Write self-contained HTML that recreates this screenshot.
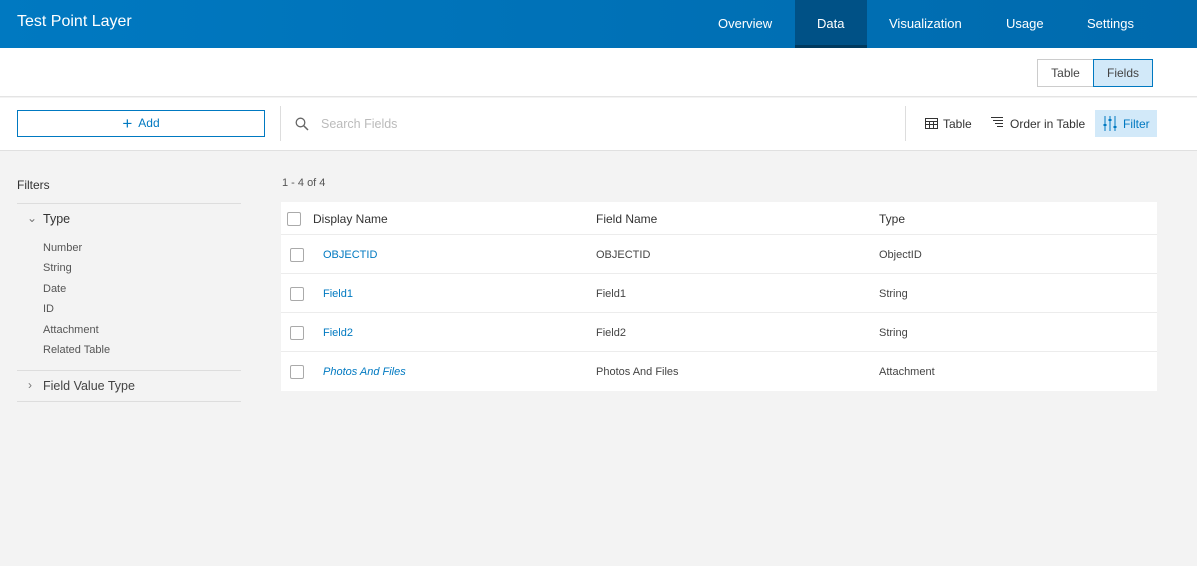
<!DOCTYPE html>
<html><head><style>
*{box-sizing:border-box;margin:0;padding:0}
body{width:1197px;height:566px;background:#f3f3f3;font-family:"Liberation Sans",sans-serif;position:relative;overflow:hidden;color:#323232}
.hdr{position:absolute;left:0;top:0;width:1197px;height:48px;background:linear-gradient(90deg,#0079c1,#006aad)}
.hdr .t{position:absolute;left:17px;top:13px;color:#fff;font-size:16px}
.nav{position:absolute;top:16px;color:#fff;font-size:13px}
.data{position:absolute;left:795px;top:0;width:72px;height:48px;background:#005186;border-bottom:3px solid #003a5f}
.bar1{position:absolute;left:0;top:48px;width:1197px;height:49px;background:#fff;border-bottom:1px solid #e4e4e4}
.seg{position:absolute;top:59px;height:28px;font-size:12px;line-height:26px;text-align:center;border:1px solid #ccc;color:#444}
.bar2{position:absolute;left:0;top:98px;width:1197px;height:53px;background:#fff;border-bottom:1px solid #e0e0e0}
.add{position:absolute;left:17px;top:110px;width:248px;height:27px;border:1px solid #0079c1;color:#0079c1;font-size:12px;text-align:center;line-height:25px}
.vs{position:absolute;top:106px;width:1px;height:35px;background:#ddd}
.tb{position:absolute;top:117px;font-size:12px;color:#323232}
.side{position:absolute;font-size:11px;color:#555}
.hl{position:absolute;left:17px;width:224px;height:1px;background:#ddd}
.tbl{position:absolute;left:281px;top:202px;width:876px;background:#fff}
.row{position:relative;height:39px;border-bottom:1px solid #ececec;font-size:11px;color:#444}
.row span{position:absolute;top:14px}
.cb{position:absolute;left:9px;top:13px;width:14px;height:14px;border:1px solid #aaa;border-radius:2px;background:#fff}
a{color:#0079c1;text-decoration:none}
</style></head><body>
<div class="hdr"><div class="t">Test Point Layer</div>
<div class="data"></div>
<div class="nav" style="left:718px">Overview</div>
<div class="nav" style="left:817px">Data</div>
<div class="nav" style="left:889px">Visualization</div>
<div class="nav" style="left:1006px">Usage</div>
<div class="nav" style="left:1087px">Settings</div>
</div>
<div class="bar1"></div>
<div class="seg" style="left:1037px;width:57px;background:#fff">Table</div>
<div class="seg" style="left:1093px;width:60px;background:#d2e9f9;border-color:#0079c1">Fields</div>
<div class="bar2"></div>
<div class="add"><span style="font-size:17px;vertical-align:-2px">+</span>&nbsp; Add</div>
<div class="vs" style="left:280px"></div>
<svg style="position:absolute;left:295px;top:117px" width="14" height="14" viewBox="0 0 14 14"><circle cx="5.5" cy="5.5" r="4.3" fill="none" stroke="#666" stroke-width="1.3"/><path d="M8.6 8.6L13 13" stroke="#666" stroke-width="1.5"/></svg>
<div class="tb" style="left:321px;color:#bbb;font-size:12.5px">Search Fields</div>
<div class="vs" style="left:905px"></div>
<svg style="position:absolute;left:925px;top:118px" width="13" height="11"><rect x=".5" y=".5" width="12" height="10" fill="none" stroke="#333"/><path d="M0 3.5h13M0 6.5h13M4.5 3v8M8.5 3v8" stroke="#333"/></svg>
<div class="tb" style="left:943px">Table</div>
<svg style="position:absolute;left:991px;top:117px" width="13" height="12"><path d="M0 .5h12M2 3.5h10M4 6.5h8M6 9.5h6" stroke="#333"/></svg>
<div class="tb" style="left:1010px">Order in Table</div>
<div style="position:absolute;left:1095px;top:110px;width:62px;height:27px;background:#d2e9f9"></div>
<svg style="position:absolute;left:1103px;top:116px" width="14" height="15"><path d="M2 0v15M7 0v15M12 0v15" stroke="#0079c1"/><path d="M0.5 9h3M5.5 4h3M10.5 11h3" stroke="#0079c1" stroke-width="2"/></svg>
<div class="tb" style="left:1123px;color:#0079c1">Filter</div>

<div class="side" style="left:17px;top:178px;font-size:12px;color:#333">Filters</div>
<div class="hl" style="top:203px"></div>
<div class="side" style="left:27px;top:211px;font-size:12px;color:#777">&#8964;</div>
<div class="side" style="left:43px;top:212px;font-size:12.5px;color:#333">Type</div>
<div class="side" style="left:43px;top:242px">Number</div>
<div class="side" style="left:43px;top:262px">String</div>
<div class="side" style="left:43px;top:283px">Date</div>
<div class="side" style="left:43px;top:303px">ID</div>
<div class="side" style="left:43px;top:324px">Attachment</div>
<div class="side" style="left:43px;top:344px">Related Table</div>
<div class="hl" style="top:370px"></div>
<div class="side" style="left:28px;top:378px;font-size:12px;color:#777">›</div>
<div class="side" style="left:43px;top:379px;font-size:12.5px;color:#444">Field Value Type</div>
<div class="hl" style="top:401px"></div>

<div class="side" style="left:282px;top:177px;color:#555">1 - 4 of 4</div>
<div class="tbl">
<div class="row" style="height:33px;font-size:12px;color:#333"><div class="cb" style="left:6px;top:10px"></div><span style="left:32px;top:10px">Display Name</span><span style="left:315px;top:10px">Field Name</span><span style="left:598px;top:10px">Type</span></div>
<div class="row"><div class="cb"></div><span style="left:42px"><a>OBJECTID</a></span><span style="left:315px">OBJECTID</span><span style="left:598px">ObjectID</span></div>
<div class="row"><div class="cb"></div><span style="left:42px"><a>Field1</a></span><span style="left:315px">Field1</span><span style="left:598px">String</span></div>
<div class="row"><div class="cb"></div><span style="left:42px"><a>Field2</a></span><span style="left:315px">Field2</span><span style="left:598px">String</span></div>
<div class="row" style="border:0"><div class="cb"></div><span style="left:42px"><a><i>Photos And Files</i></a></span><span style="left:315px">Photos And Files</span><span style="left:598px">Attachment</span></div>
</div>
</body></html>
